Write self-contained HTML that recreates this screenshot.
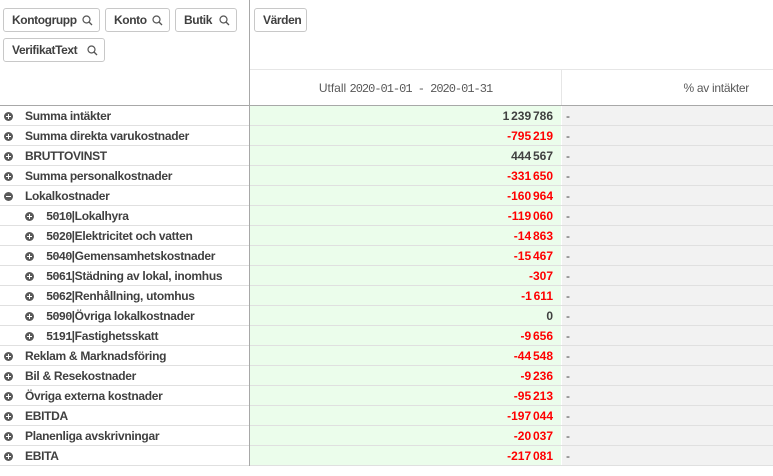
<!DOCTYPE html>
<html><head><meta charset="utf-8"><style>
*{margin:0;padding:0;box-sizing:border-box}
body{width:773px;height:476px;background:#fff;font-family:"Liberation Sans",sans-serif;color:#404040;position:relative;overflow:hidden}
.chip{position:absolute;height:24px;border:1px solid #c8c8c8;border-radius:3px;font-size:12px;font-weight:bold;line-height:22px;padding-left:8px;color:#404040;background:#fff;letter-spacing:-0.4px}
.chip svg{position:absolute;right:6px;top:6px}
.vl{position:absolute;left:249px;top:0;width:1px;height:466px;background:#a8a8a8}
.hl{position:absolute;left:250px;top:69px;width:523px;height:1px;background:#e6e6e6}
.hd{position:absolute;top:70px;height:36px;font-size:12px;color:#595959;line-height:36px}
.row{position:absolute;left:0;width:773px;height:20px;border-bottom:1px solid #e0e0e0;font-size:12px;line-height:21px}
.row .lab{position:absolute;top:0;font-weight:bold;white-space:nowrap;letter-spacing:-0.3px}
.row .ic{position:absolute;top:6px;width:9px;height:9px;border-radius:50%;background:#595959}
.row .ic:before{content:"";position:absolute;left:2px;top:4px;width:5px;height:1px;background:#fff}
.row .ic.p:after{content:"";position:absolute;left:4px;top:2px;width:1px;height:5px;background:#fff}
.g{position:absolute;left:250px;top:0;width:311px;height:19px;background:#ebfdeb}
.gr{position:absolute;left:562px;top:0;width:211px;height:19px;background:#f2f2f2}
.v{position:absolute;right:220px;top:0;font-weight:bold;font-size:12px;word-spacing:-1.5px}
.neg{color:#f00}
.d{position:absolute;left:566px;top:0}
.m{font-family:"Liberation Mono",monospace;letter-spacing:-0.8px}
</style></head><body>
<div class="chip" style="left:3px;top:8px;width:97px">Kontogrupp<svg width="11" height="11" viewBox="0 0 11 11"><circle cx="4.5" cy="4.5" r="3.5" fill="none" stroke="#555" stroke-width="1.2"/><path d="M7 7l3 3" stroke="#555" stroke-width="1.3"/></svg></div>
<div class="chip" style="left:105px;top:8px;width:65px">Konto<svg width="11" height="11" viewBox="0 0 11 11"><circle cx="4.5" cy="4.5" r="3.5" fill="none" stroke="#555" stroke-width="1.2"/><path d="M7 7l3 3" stroke="#555" stroke-width="1.3"/></svg></div>
<div class="chip" style="left:175px;top:8px;width:62px">Butik<svg width="11" height="11" viewBox="0 0 11 11"><circle cx="4.5" cy="4.5" r="3.5" fill="none" stroke="#555" stroke-width="1.2"/><path d="M7 7l3 3" stroke="#555" stroke-width="1.3"/></svg></div>
<div class="chip" style="left:3px;top:38px;width:102px">VerifikatText<svg width="11" height="11" viewBox="0 0 11 11"><circle cx="4.5" cy="4.5" r="3.5" fill="none" stroke="#555" stroke-width="1.2"/><path d="M7 7l3 3" stroke="#555" stroke-width="1.3"/></svg></div>
<div class="chip" style="left:254px;top:8px;width:53px">Värden</div>
<div class="hl"></div>
<div class="hd" style="left:250px;width:311px;text-align:center">Utfall <span class="m" style="letter-spacing:-1px">2020-01-01 - 2020-01-31</span></div>
<div style="position:absolute;left:561px;top:70px;width:1px;height:36px;background:#e6e6e6"></div>
<div class="hd" style="left:562px;width:187px;text-align:right;letter-spacing:-0.3px">% av intäkter</div>
<div style="position:absolute;left:0;top:105px;width:773px;height:1px;background:#a8a8a8"></div>
<div id="rows"></div>
<div class="vl"></div>
<script>
var R=[["Summa intäkter","1 239 786",0],["Summa direkta varukostnader","-795 219",0],["BRUTTOVINST","444 567",0],["Summa personalkostnader","-331 650",0],["Lokalkostnader","-160 964",0,1],["5010|Lokalhyra","-119 060",1],["5020|Elektricitet och vatten","-14 863",1],["5040|Gemensamhetskostnader","-15 467",1],["5061|Städning av lokal, inomhus","-307",1],["5062|Renhållning, utomhus","-1 611",1],["5090|Övriga lokalkostnader","0",1],["5191|Fastighetsskatt","-9 656",1],["Reklam & Marknadsföring","-44 548",0],["Bil & Resekostnader","-9 236",0],["Övriga externa kostnader","-95 213",0],["EBITDA","-197 044",0],["Planenliga avskrivningar","-20 037",0],["EBITA","-217 081",0]];
var h="";R.forEach(function(r,i){var ind=r[2]?21:0;var lab=r[0];if(r[2]){var p=lab.split("|");lab='<span class="m">'+p[0]+'</span>|'+p[1];}
h+='<div class="row" style="top:'+(106+i*20)+'px"><div class="g"></div><div class="gr"></div><div class="ic'+(r[3]?'':' p')+'" style="left:'+(4+ind)+'px"></div><div class="lab" style="left:'+(25+ind)+'px">'+lab+'</div><div class="v'+(r[1][0]=="-"?" neg":"")+'">'+r[1]+'</div><div class="d">-</div></div>';});
document.getElementById("rows").innerHTML=h;
</script>
</body></html>
